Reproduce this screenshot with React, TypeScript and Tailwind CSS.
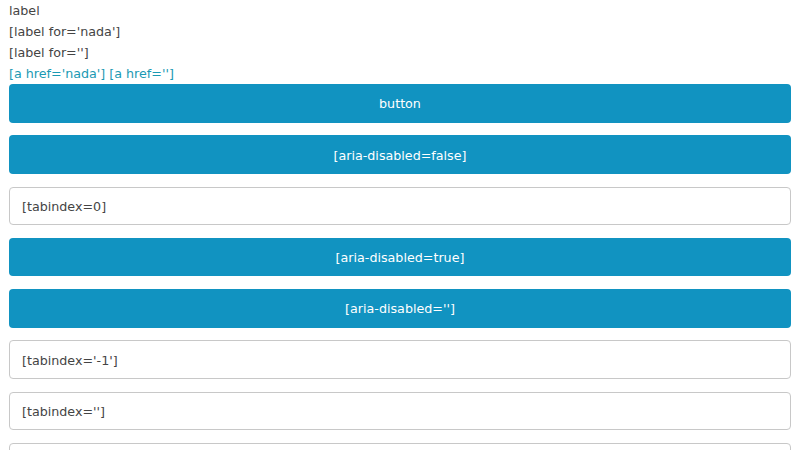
export default function App() {
  const font = { fontFamily: '"DejaVu Sans", sans-serif' }
  const blue = 'mb-[12.8px] flex h-[38.5px] w-full items-center justify-center rounded bg-[#1193c1] pt-px text-white'
  const plain = 'mb-[12.8px] flex h-[38.5px] w-full items-center rounded border border-[#c8c8c8] bg-white px-3 pt-px text-[#444]'

  return (
    <div className="min-h-[450px] bg-white px-[9px] text-[12.7px] leading-[21px] text-[#444]" style={font}>
      <div>label</div>
      <div>[label for='nada']</div>
      <div>[label for='']</div>
      <div className="text-[#1a99b3]">
        <a>[a href='nada']</a> <a>[a href='']</a>
      </div>
      <div className={blue}>button</div>
      <div className={blue}>[aria-disabled=false]</div>
      <div className={plain}>[tabindex=0]</div>
      <div className={blue}>[aria-disabled=true]</div>
      <div className={blue}>[aria-disabled='']</div>
      <div className={plain}>[tabindex='-1']</div>
      <div className={plain}>[tabindex='']</div>
      <div className={plain}>[tabindex]</div>
    </div>
  )
}
